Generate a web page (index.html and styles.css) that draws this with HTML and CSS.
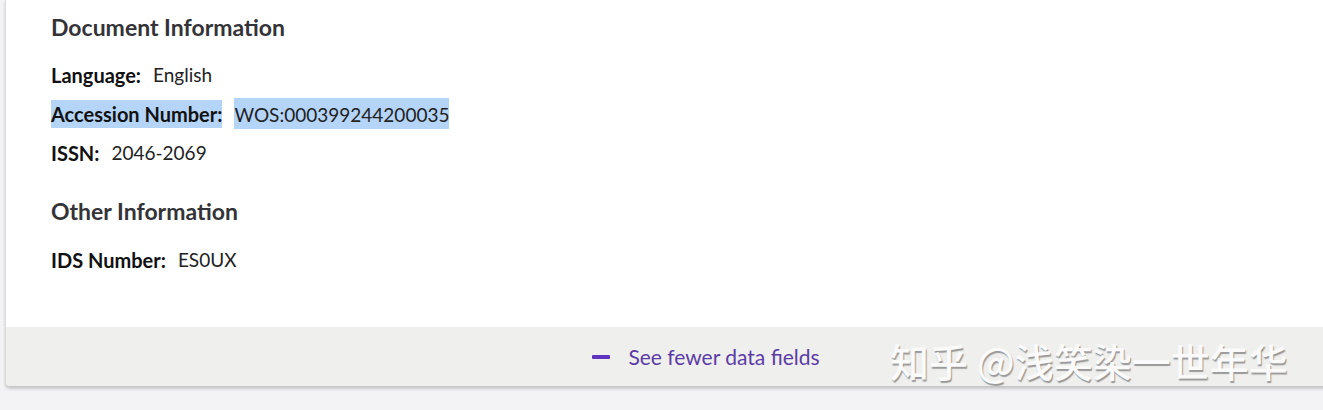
FILE: index.html
```html
<!DOCTYPE html>
<html>
<head>
<meta charset="utf-8">
<link rel="stylesheet" href="styles.css">
</head>
<body>
<div class="card">
  <div class="content">
    <section class="group">
      <h2 class="group-title">Document Information</h2>
      <div class="field"><span class="label">Language:</span><span class="value">English</span></div>
      <div class="field"><span class="label sel">Accession Number:</span><span class="value sel sel-val">WOS:000399244200035</span></div>
      <div class="field"><span class="label">ISSN:</span><span class="value">2046-2069</span></div>
    </section>
    <section class="group group-other">
      <h2 class="group-title">Other Information</h2>
      <div class="field"><span class="label">IDS Number:</span><span class="value">ES0UX</span></div>
    </section>
  </div>
  <div class="footer">
    <button class="toggle"><span class="minus"></span><span class="toggle-text">See fewer data fields</span></button>
  </div>
</div>
<div class="watermark">知乎 @浅笑染一世年华</div>
</body>
</html>
```
FILE: styles.css
```css
html, body {
  margin: 0;
  padding: 0;
}
body {
  background: #f3f3f5;
  width: 1323px;
  height: 410px;
  overflow: hidden;
  position: relative;
  font-family: Lato, "Noto Sans", "Liberation Sans", sans-serif;
  color: #1d1d1f;
}
.card {
  margin-left: 5px;
  width: 1400px;
  background: #ffffff;
  border-left: 1px solid #dcdcdc;
  border-bottom: 1px solid #c8c8c8;
  border-radius: 0 0 5px 5px;
  box-shadow: 0 2px 3px rgba(0,0,0,0.18);
  overflow: hidden;
}
.content {
  padding: 13px 0 0 45px;
  height: 327px;
  box-sizing: border-box;
}
.group-title {
  margin: 0 0 14px 0;
  font-size: 23px;
  font-weight: 700;
  color: #333338;
  line-height: 28px;
}
.group-other {
  margin-top: 25px;
}
.group-other .group-title {
  margin-bottom: 15px;
}
.field {
  display: flex;
  align-items: center;
  height: 39px;
  font-size: 20px;
  line-height: 24px;
}
.label {
  font-weight: 700;
  color: #111;
  padding: 2px 0;
}
.value {
  margin-left: 12px;
  color: #222;
  font-size: 19px;
  padding: 2px 0;
}
.sel {
  background: #b4d4f8;
}
.sel-val {
  padding: 5px 0 2px 0;
}
.footer {
  height: 59px;
  background: #efefed;
  display: flex;
  justify-content: center;
  align-items: center;
}
.toggle {
  display: flex;
  align-items: center;
  gap: 18px;
  background: none;
  border: none;
  padding: 0;
  font-family: inherit;
  cursor: pointer;
}
.minus {
  width: 18px;
  height: 4px;
  border-radius: 1px;
  background: #5e33bf;
}
.toggle-text {
  font-size: 21px;
  color: #5b3ca6;
}
.watermark {
  position: absolute;
  left: 890px;
  top: 332px;
  font-family: "Noto Sans CJK SC", sans-serif;
  font-size: 39px;
  font-weight: 500;
  color: #fafafa;
  text-shadow: 1px 2px 1px #9a9a9a;
  white-space: nowrap;
}
```
